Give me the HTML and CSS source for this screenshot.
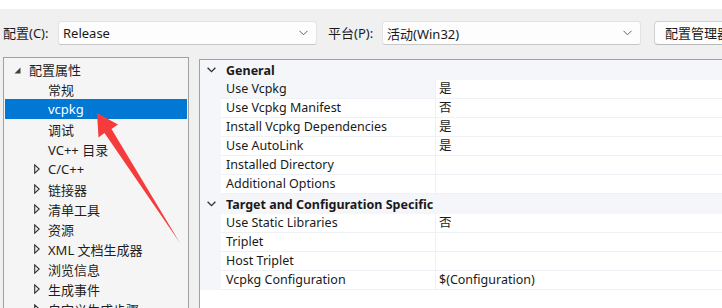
FILE: index.html
```html
<!DOCTYPE html>
<html lang="zh">
<head>
<meta charset="utf-8">
<title>vcpkg 属性页</title>
<link rel="stylesheet" href="styles.css">
</head>
<body>
<div class="page">
  <div class="topstrip"></div>
  <div class="toolbar">
    <span class="lbl lbl-cfg">配置(C):</span>
    <div class="combo combo-cfg"><span>Release</span><svg class="chev" width="9" height="6" viewBox="0 0 9 6"><path d="M0.5 0.8 L4.5 4.8 L8.5 0.8" fill="none" stroke="#606060" stroke-width="1"/></svg></div>
    <span class="lbl lbl-plat">平台(P):</span>
    <div class="combo combo-plat"><span>活动(Win32)</span><svg class="chev" width="9" height="6" viewBox="0 0 9 6"><path d="M0.5 0.8 L4.5 4.8 L8.5 0.8" fill="none" stroke="#606060" stroke-width="1"/></svg></div>
    <div class="btn">配置管理器(O)...</div>
  </div>
  <div class="main">
    <div class="tree">
      <div class="trow root"><span class="tw"><svg width="7" height="7" viewBox="0 0 7 7"><path d="M6.5 0.5 L6.5 6.5 L0.5 6.5 Z" fill="#404040"/></svg></span><span>配置属性</span></div>
      <div class="trow leaf"><span>常规</span></div>
      <div class="trow leaf sel"><span>vcpkg</span></div>
      <div class="trow leaf"><span>调试</span></div>
      <div class="trow leaf"><span>VC++ 目录</span></div>
      <div class="trow node"><span class="tw"><svg width="6" height="10" viewBox="0 0 6 10"><path d="M0.7 0.8 L5.2 5 L0.7 9.2 Z" fill="none" stroke="#303030" stroke-width="1.1"/></svg></span><span>C/C++</span></div>
      <div class="trow node"><span class="tw"><svg width="6" height="10" viewBox="0 0 6 10"><path d="M0.7 0.8 L5.2 5 L0.7 9.2 Z" fill="none" stroke="#303030" stroke-width="1.1"/></svg></span><span>链接器</span></div>
      <div class="trow node"><span class="tw"><svg width="6" height="10" viewBox="0 0 6 10"><path d="M0.7 0.8 L5.2 5 L0.7 9.2 Z" fill="none" stroke="#303030" stroke-width="1.1"/></svg></span><span>清单工具</span></div>
      <div class="trow node"><span class="tw"><svg width="6" height="10" viewBox="0 0 6 10"><path d="M0.7 0.8 L5.2 5 L0.7 9.2 Z" fill="none" stroke="#303030" stroke-width="1.1"/></svg></span><span>资源</span></div>
      <div class="trow node"><span class="tw"><svg width="6" height="10" viewBox="0 0 6 10"><path d="M0.7 0.8 L5.2 5 L0.7 9.2 Z" fill="none" stroke="#303030" stroke-width="1.1"/></svg></span><span>XML 文档生成器</span></div>
      <div class="trow node"><span class="tw"><svg width="6" height="10" viewBox="0 0 6 10"><path d="M0.7 0.8 L5.2 5 L0.7 9.2 Z" fill="none" stroke="#303030" stroke-width="1.1"/></svg></span><span>浏览信息</span></div>
      <div class="trow node"><span class="tw"><svg width="6" height="10" viewBox="0 0 6 10"><path d="M0.7 0.8 L5.2 5 L0.7 9.2 Z" fill="none" stroke="#303030" stroke-width="1.1"/></svg></span><span>生成事件</span></div>
      <div class="trow node"><span class="tw"><svg width="6" height="10" viewBox="0 0 6 10"><path d="M0.7 0.8 L5.2 5 L0.7 9.2 Z" fill="none" stroke="#303030" stroke-width="1.1"/></svg></span><span>自定义生成步骤</span></div>
    </div>
    <div class="grid">
      <div class="cat"><span class="gut"><svg width="9" height="6" viewBox="0 0 9 6"><path d="M0.6 0.8 L4.5 4.7 L8.4 0.8" fill="none" stroke="#303030" stroke-width="1.3"/></svg></span><span class="cat-name">General</span></div>
      <div class="prop focus"><span class="gut"></span><span class="name">Use Vcpkg</span><span class="val">是</span></div>
      <div class="prop"><span class="gut"></span><span class="name">Use Vcpkg Manifest</span><span class="val">否</span></div>
      <div class="prop"><span class="gut"></span><span class="name">Install Vcpkg Dependencies</span><span class="val">是</span></div>
      <div class="prop"><span class="gut"></span><span class="name">Use AutoLink</span><span class="val">是</span></div>
      <div class="prop"><span class="gut"></span><span class="name">Installed Directory</span><span class="val"></span></div>
      <div class="prop"><span class="gut"></span><span class="name">Additional Options</span><span class="val"></span></div>
      <div class="cat"><span class="gut"><svg width="9" height="6" viewBox="0 0 9 6"><path d="M0.6 0.8 L4.5 4.7 L8.4 0.8" fill="none" stroke="#303030" stroke-width="1.3"/></svg></span><span class="cat-name">Target and Configuration Specific</span></div>
      <div class="prop"><span class="gut"></span><span class="name">Use Static Libraries</span><span class="val">否</span></div>
      <div class="prop"><span class="gut"></span><span class="name">Triplet</span><span class="val"></span></div>
      <div class="prop"><span class="gut"></span><span class="name">Host Triplet</span><span class="val"></span></div>
      <div class="prop"><span class="gut"></span><span class="name">Vcpkg Configuration</span><span class="val">$(Configuration)</span></div>
    </div>
  </div>
  <svg class="arrow" width="722" height="308" viewBox="0 0 722 308"><polygon points="97,113 118,124.5 111.5,129 180,243 104.5,133 98.5,137.5" fill="#f53b3b"/></svg>
</div>
</body>
</html>
```
FILE: styles.css
```css
html, body {
  margin: 0;
  padding: 0;
}
body {
  width: 722px;
  height: 308px;
  overflow: hidden;
  background: #f0f0f0;
  font-family: "Noto Sans", "Noto Sans CJK SC", sans-serif;
  font-size: 12px;
  color: #1a1a1a;
}
.page {
  position: relative;
  width: 722px;
  height: 308px;
  overflow: hidden;
}
.topstrip {
  height: 9px;
  background: #ffffff;
}
.toolbar {
  height: 48px;
  display: flex;
  align-items: flex-start;
  padding-top: 12px;
  box-sizing: border-box;
  white-space: nowrap;
  overflow: hidden;
}
.toolbar > * {
  flex-shrink: 0;
}
.lbl {
  font-size: 13px;
  line-height: 24px;
  color: #1a1a1a;
}
.lbl-cfg {
  margin-left: 3px;
  width: 55px;
}
.lbl-plat {
  margin-left: 11px;
  width: 54px;
}
.combo {
  box-sizing: border-box;
  width: 259px;
  height: 24px;
  background: #fdfdfd;
  border: 1px solid #e3e3e3;
  border-bottom-color: #c8c8c8;
  border-radius: 3px;
  display: flex;
  align-items: center;
  justify-content: space-between;
  padding: 0 8px 0 4px;
  font-size: 13px;
}
.btn {
  box-sizing: border-box;
  margin-left: 13px;
  height: 24px;
  padding: 0 10px;
  background: #fdfdfd;
  border: 1px solid #d0d0d0;
  border-bottom-color: #b8b8b8;
  border-radius: 4px;
  font-size: 13px;
  line-height: 22px;
}
.main {
  display: flex;
  align-items: flex-start;
}
.tree {
  flex-shrink: 0;
  margin-left: 3px;
  width: 186px;
  box-sizing: border-box;
  height: 260px;
  background: #f5f5f5;
  border: 1px solid #a0a0a0;
  border-bottom: none;
  padding-top: 1px;
  font-size: 13px;
}
.trow {
  height: 20px;
  display: flex;
  align-items: center;
  margin: 0 1px;
  white-space: nowrap;
  color: #1e1e1e;
}
.trow.root {
  padding-left: 9px;
}
.trow.root .tw {
  width: 15px;
  display: flex;
  align-items: center;
  padding-top: 3px;
}
.trow.leaf {
  padding-left: 43px;
}
.trow.node {
  padding-left: 29px;
}
.trow.node .tw {
  width: 14px;
  display: flex;
  align-items: center;
}
.trow.sel {
  background: #0078d4;
  color: #ffffff;
}
.grid {
  margin-left: 10px;
  margin-top: 2px;
  flex: 1;
  height: 260px;
  background: #ffffff;
  border-top: 1px solid #a0a0a0;
  border-left: 1px solid #a0a0a0;
  white-space: nowrap;
}
.cat {
  height: 20px;
  display: flex;
  align-items: center;
  background: #f4f6fa;
}
.cat .gut {
  width: 21px;
  display: flex;
  justify-content: center;
  align-items: center;
  padding-left: 2px;
  box-sizing: border-box;
}
.cat-name {
  font-weight: 700;
  padding-left: 5px;
  font-size: 12.5px;
}
.prop {
  height: 19px;
  display: flex;
}
.prop .gut {
  width: 21px;
  background: #f4f6fa;
}
.prop .name {
  width: 214px;
  box-sizing: border-box;
  padding-left: 5px;
  line-height: 18px;
  border-bottom: 1px solid #eef1f5;
  background: #ffffff;
  font-size: 12.5px;
}
.prop.focus .name {
  background: #f4f6fa;
}
.prop .val {
  flex: 1;
  padding-left: 3px;
  line-height: 18px;
  border-left: 1px solid #eef1f5;
  border-bottom: 1px solid #eef1f5;
  font-size: 12.5px;
}
.arrow {
  position: absolute;
  left: 0;
  top: 0;
  pointer-events: none;
}
```
